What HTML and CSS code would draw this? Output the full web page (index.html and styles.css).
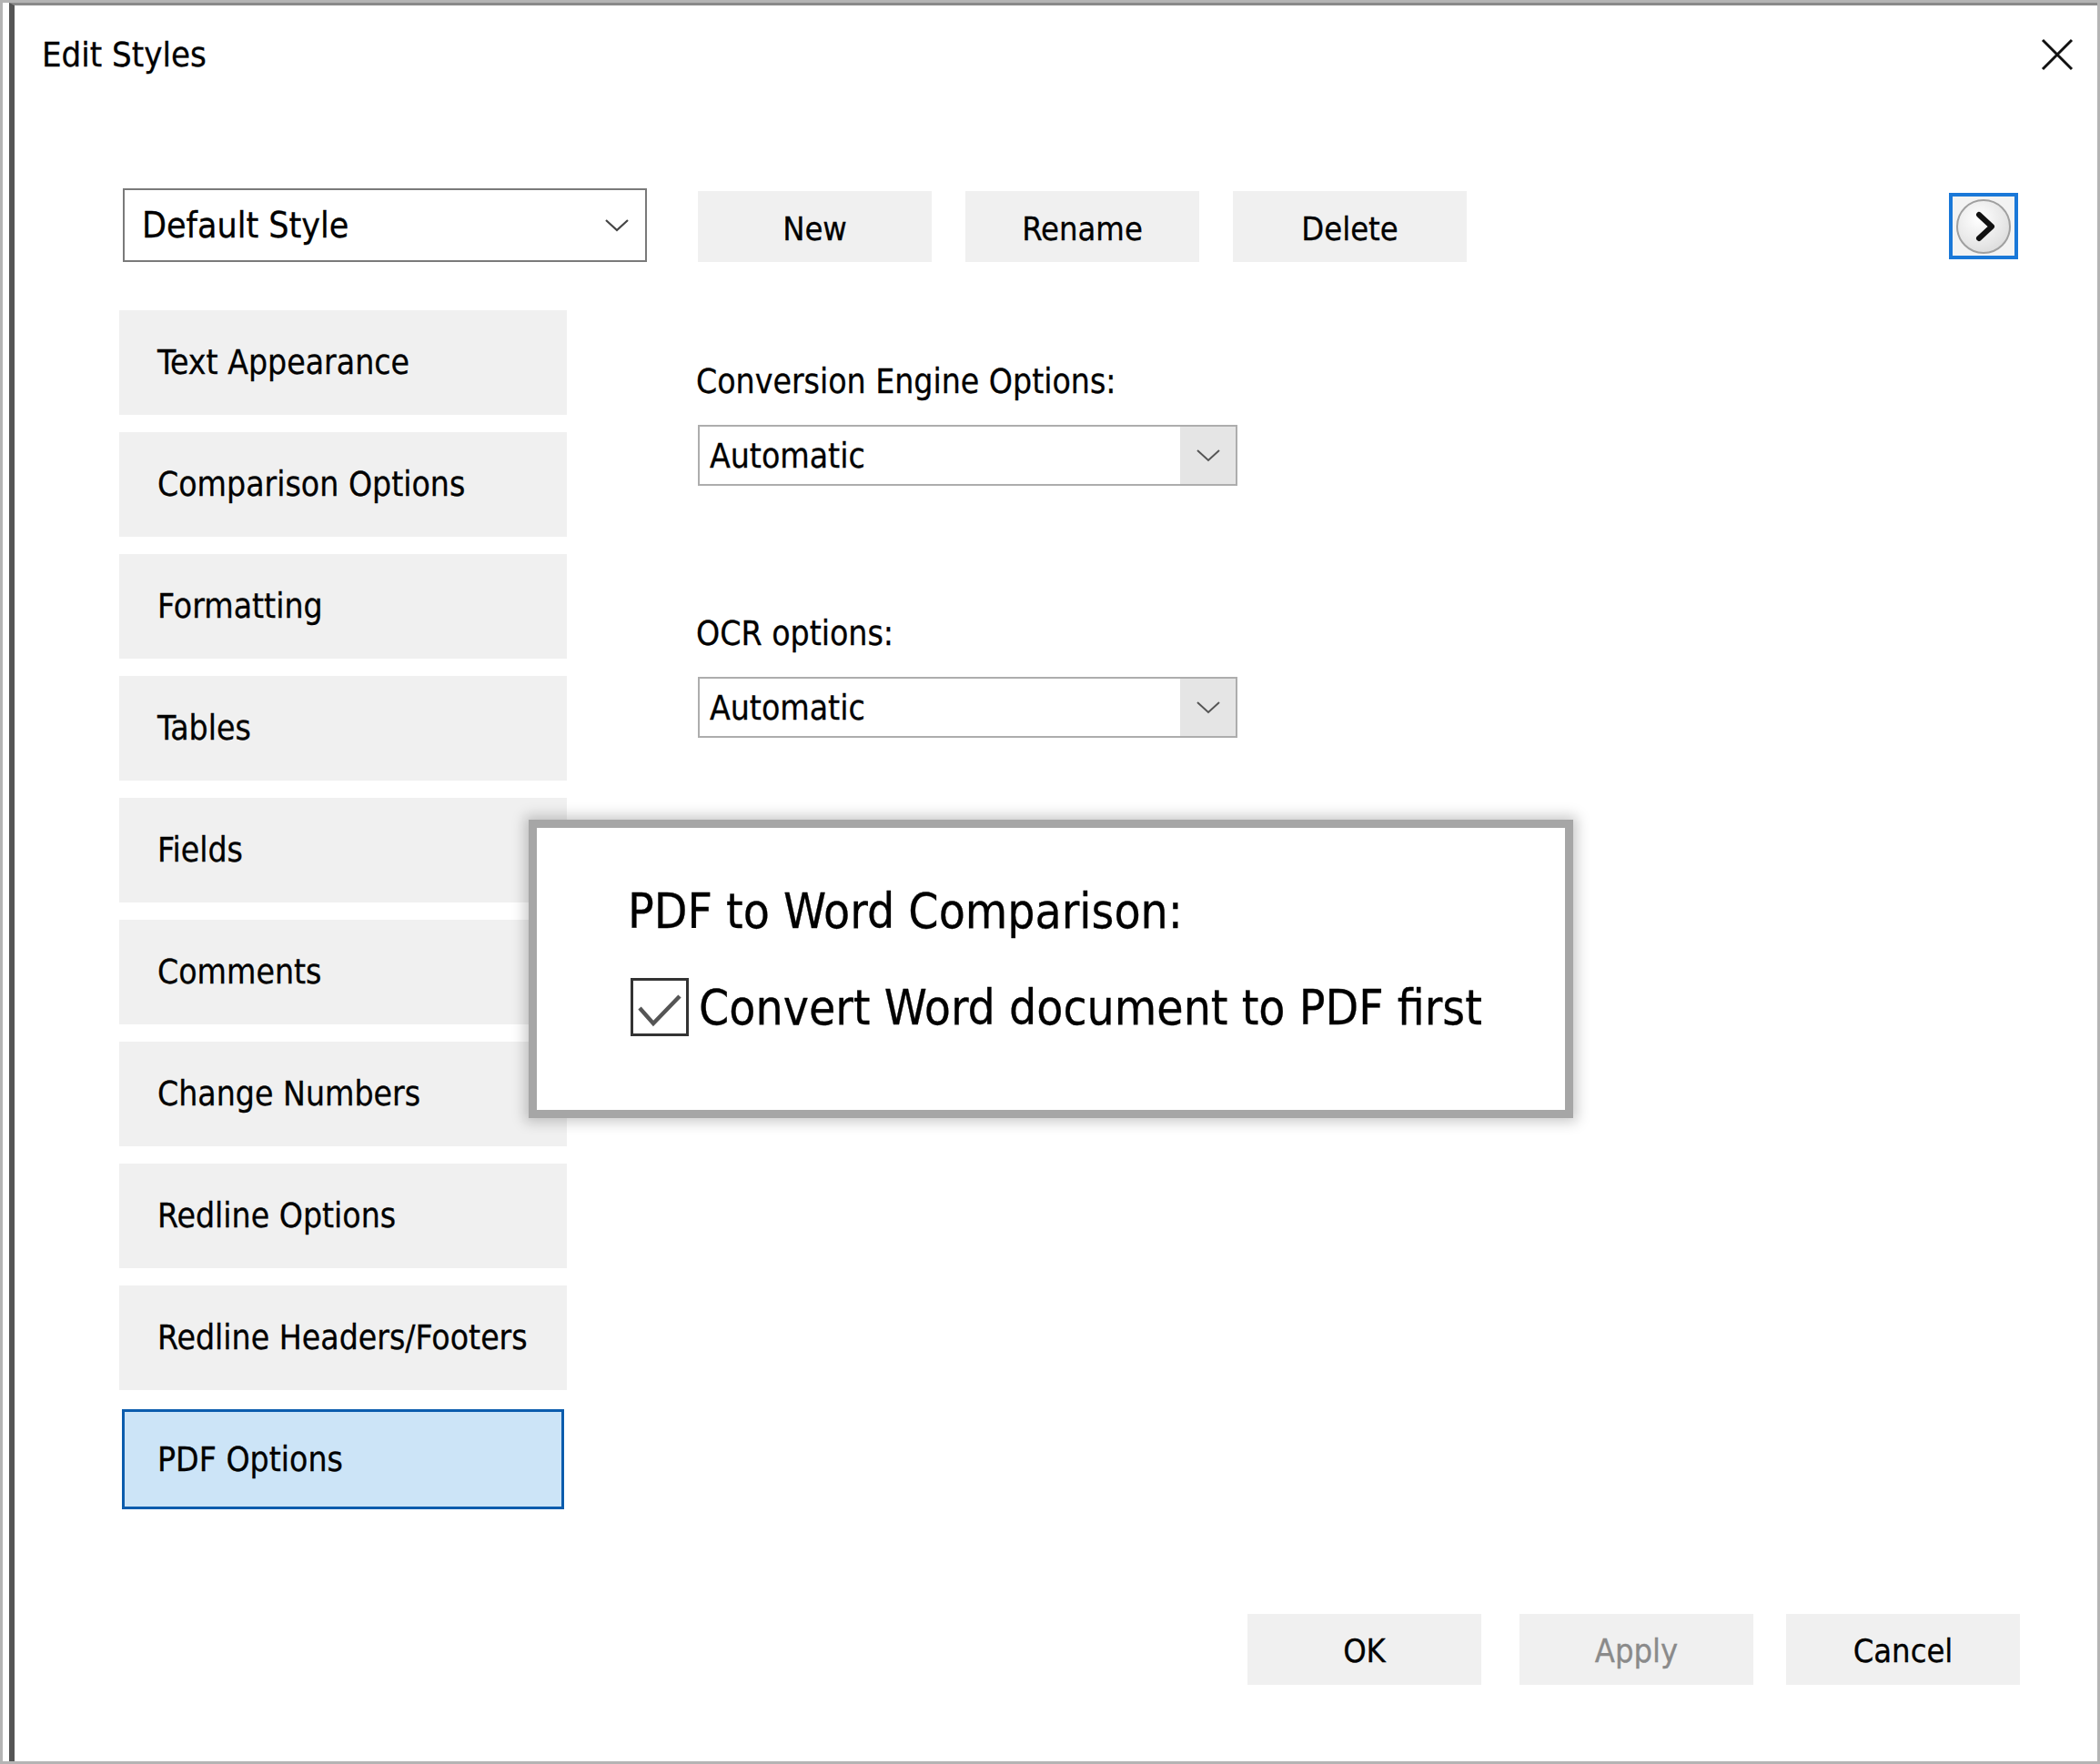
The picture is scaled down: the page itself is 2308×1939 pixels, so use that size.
FILE: index.html
```html
<!DOCTYPE html>
<html lang="en">
	<head>
		<meta charset="UTF-8" />
		<meta name="viewport" content="width=device-width, initial-scale=1.0" />
		<title>Edit Styles</title>
		<link rel="stylesheet" href="styles.css">
	</head>
	<body>
		<div class="frame">
			<div class="dialog">
				<div class="titlebar">
					<span class="title">Edit Styles</span>
					<button class="close" title="Close">
						<svg width="36" height="36" viewBox="0 0 36 36">
							<path d="M2 2 L34 34 M34 2 L2 34" stroke="#111" stroke-width="3" fill="none" />
						</svg>
					</button>
				</div>

				<div class="toolbar">
					<div class="style-select">
						<span>Default Style</span>
						<svg width="26" height="14" viewBox="0 0 26 14">
							<path d="M1 1 L13 12 L25 1" stroke="#444" stroke-width="2.2" fill="none" />
						</svg>
					</div>
					<button class="btn">New</button>
					<button class="btn">Rename</button>
					<button class="btn">Delete</button>
					<button class="next" title="More">
						<span class="next-circle">
							<svg width="26" height="34" viewBox="0 0 26 34">
								<path d="M6 4 L20 17 L6 30" stroke="#111" stroke-width="6" fill="none" stroke-linecap="round" stroke-linejoin="round" />
							</svg>
						</span>
					</button>
				</div>

				<div class="main">
					<div class="nav">
						<div class="nav-item">Text Appearance</div>
						<div class="nav-item">Comparison Options</div>
						<div class="nav-item">Formatting</div>
						<div class="nav-item">Tables</div>
						<div class="nav-item">Fields</div>
						<div class="nav-item">Comments</div>
						<div class="nav-item">Change Numbers</div>
						<div class="nav-item">Redline Options</div>
						<div class="nav-item">Redline Headers/Footers</div>
						<div class="nav-item selected">PDF Options</div>
					</div>

					<div class="pane">
						<div class="field-label">Conversion Engine Options:</div>
						<div class="combo">
							<span class="combo-text">Automatic</span>
							<span class="combo-arrow">
								<svg width="26" height="14" viewBox="0 0 26 14">
									<path d="M1 1 L13 12 L25 1" stroke="#555" stroke-width="2" fill="none" />
								</svg>
							</span>
						</div>

						<div class="field-label second">OCR options:</div>
						<div class="combo">
							<span class="combo-text">Automatic</span>
							<span class="combo-arrow">
								<svg width="26" height="14" viewBox="0 0 26 14">
									<path d="M1 1 L13 12 L25 1" stroke="#555" stroke-width="2" fill="none" />
								</svg>
							</span>
						</div>
					</div>
				</div>

				<div class="footer">
					<button class="btn">OK</button>
					<button class="btn disabled">Apply</button>
					<button class="btn">Cancel</button>
				</div>
			</div>

			<!-- zoomed callout over the page -->
			<div class="callout">
				<div class="callout-title">PDF to Word Comparison:</div>
				<div class="check-row">
					<span class="checkbox">
						<svg width="58" height="58" viewBox="0 0 58 58">
							<path d="M7 30 L22 47 L51 17" stroke="#555" stroke-width="4.5" fill="none" />
						</svg>
					</span>
					<span>Convert Word document to PDF first</span>
				</div>
			</div>
		</div>
	</body>
</html>
```

FILE: styles.css
```css
body {
	margin: 0;
	background-color: #fff;
	font-family: 'DejaVu Sans Condensed', 'DejaVu Sans', sans-serif;
	font-stretch: semi-condensed;
	color: #000;
	-webkit-text-stroke: 0.3px;
}
button {
	font-family: inherit;
	font-stretch: inherit;
	cursor: pointer;
}
.frame {
	position: relative;
	width: 2308px;
	height: 1939px;
	box-sizing: border-box;
	border: 3px solid #b4b4b4;
	padding-left: 7px;
	background-color: #fff;
}
.dialog {
	height: 100%;
	box-sizing: border-box;
	border-left: 6px solid #555;
	border-top: 3px solid #8a8a8a;
	display: flex;
	flex-direction: column;
}
.titlebar {
	height: 107px;
	display: flex;
	align-items: center;
	justify-content: space-between;
	padding-left: 30px;
	padding-right: 26px;
}
.title {
	font-size: 38px;
}
.close {
	background: none;
	border: none;
	padding: 0;
	width: 36px;
	height: 36px;
}
.close svg {
	display: block;
}
.toolbar {
	display: flex;
	align-items: flex-end;
	margin-top: 94px;
	padding-left: 119px;
	padding-right: 87px;
	height: 81px;
}
.style-select {
	width: 576px;
	height: 81px;
	box-sizing: border-box;
	border: 2px solid #7a7a7a;
	display: flex;
	align-items: center;
	justify-content: space-between;
	padding: 0 18px 0 19px;
	font-size: 39px;
	margin-right: 56px;
}
.btn {
	width: 257px;
	height: 78px;
	border: none;
	background-color: #f0f0f0;
	font-size: 36px;
	color: #000;
	padding: 0;
	margin-right: 37px;
}
.toolbar .btn {
	padding-top: 4px;
}
.btn.disabled {
	color: #8a8a8a;
}
.next {
	margin-left: auto;
	margin-bottom: 3px;
	width: 76px;
	height: 73px;
	box-sizing: border-box;
	border: 4px solid #1a78d8;
	background-color: #f3f3f3;
	padding: 0;
	display: flex;
	align-items: center;
	justify-content: center;
}
.next-circle {
	width: 60px;
	height: 60px;
	box-sizing: border-box;
	border-radius: 50%;
	border: 2px solid #a0a0a0;
	background: radial-gradient(circle at 40% 35%, #ffffff, #e6e6e6 60%, #d2d2d2);
	display: flex;
	align-items: center;
	justify-content: center;
}
.next-circle svg {
	margin-left: 3px;
}
.main {
	flex: 1;
	display: flex;
	margin-top: 53px;
	padding-left: 115px;
}
.nav {
	width: 492px;
	display: flex;
	flex-direction: column;
	gap: 19px;
}
.nav-item {
	height: 115px;
	box-sizing: border-box;
	background-color: #f0f0f0;
	display: flex;
	align-items: center;
	padding-left: 42px;
	font-size: 37px;
}
.nav-item.selected {
	margin: 2px 3px 0;
	height: 110px;
	padding-left: 36px;
	border: 3px solid #0b5cad;
	background-color: #cce4f7;
}
.pane {
	margin-left: 142px;
	padding-top: 57px;
}
.field-label {
	font-size: 37px;
	line-height: 44px;
}
.field-label.second {
	margin-top: 141px;
}
.combo {
	margin-top: 25px;
	margin-left: 2px;
	width: 593px;
	height: 67px;
	box-sizing: border-box;
	border: 2px solid #adadad;
	display: flex;
	align-items: stretch;
	font-size: 37px;
}
.combo-text {
	flex: 1;
	display: flex;
	align-items: center;
	padding-left: 11px;
	padding-top: 2px;
}
.combo-arrow {
	width: 61px;
	background-color: #e5e5e5;
	display: flex;
	align-items: center;
	justify-content: center;
}
.footer {
	display: flex;
	justify-content: flex-end;
	padding-right: 48px;
	margin-bottom: 84px;
}
.footer .btn {
	padding-top: 2px;
}
.footer .btn:nth-child(2) {
	margin-left: 5px;
}
.footer .btn:last-child {
	margin-left: -1px;
}
.callout {
	position: absolute;
	left: 578px;
	top: 898px;
	width: 1148px;
	height: 328px;
	box-sizing: border-box;
	border: 9px solid #a6a6a6;
	background-color: #fff;
	box-shadow: 0 0 14px 4px rgba(0, 0, 0, 0.22);
	padding: 62px 0 0 100px;
	font-size: 53px;
}
.callout-title {
	line-height: 60px;
}
.check-row {
	display: flex;
	align-items: center;
	margin-top: 43px;
	height: 64px;
}
.checkbox {
	width: 64px;
	height: 64px;
	box-sizing: border-box;
	border: 3px solid #333;
	margin-left: 3px;
	margin-right: 11px;
	display: flex;
	align-items: center;
	justify-content: center;
}
```
